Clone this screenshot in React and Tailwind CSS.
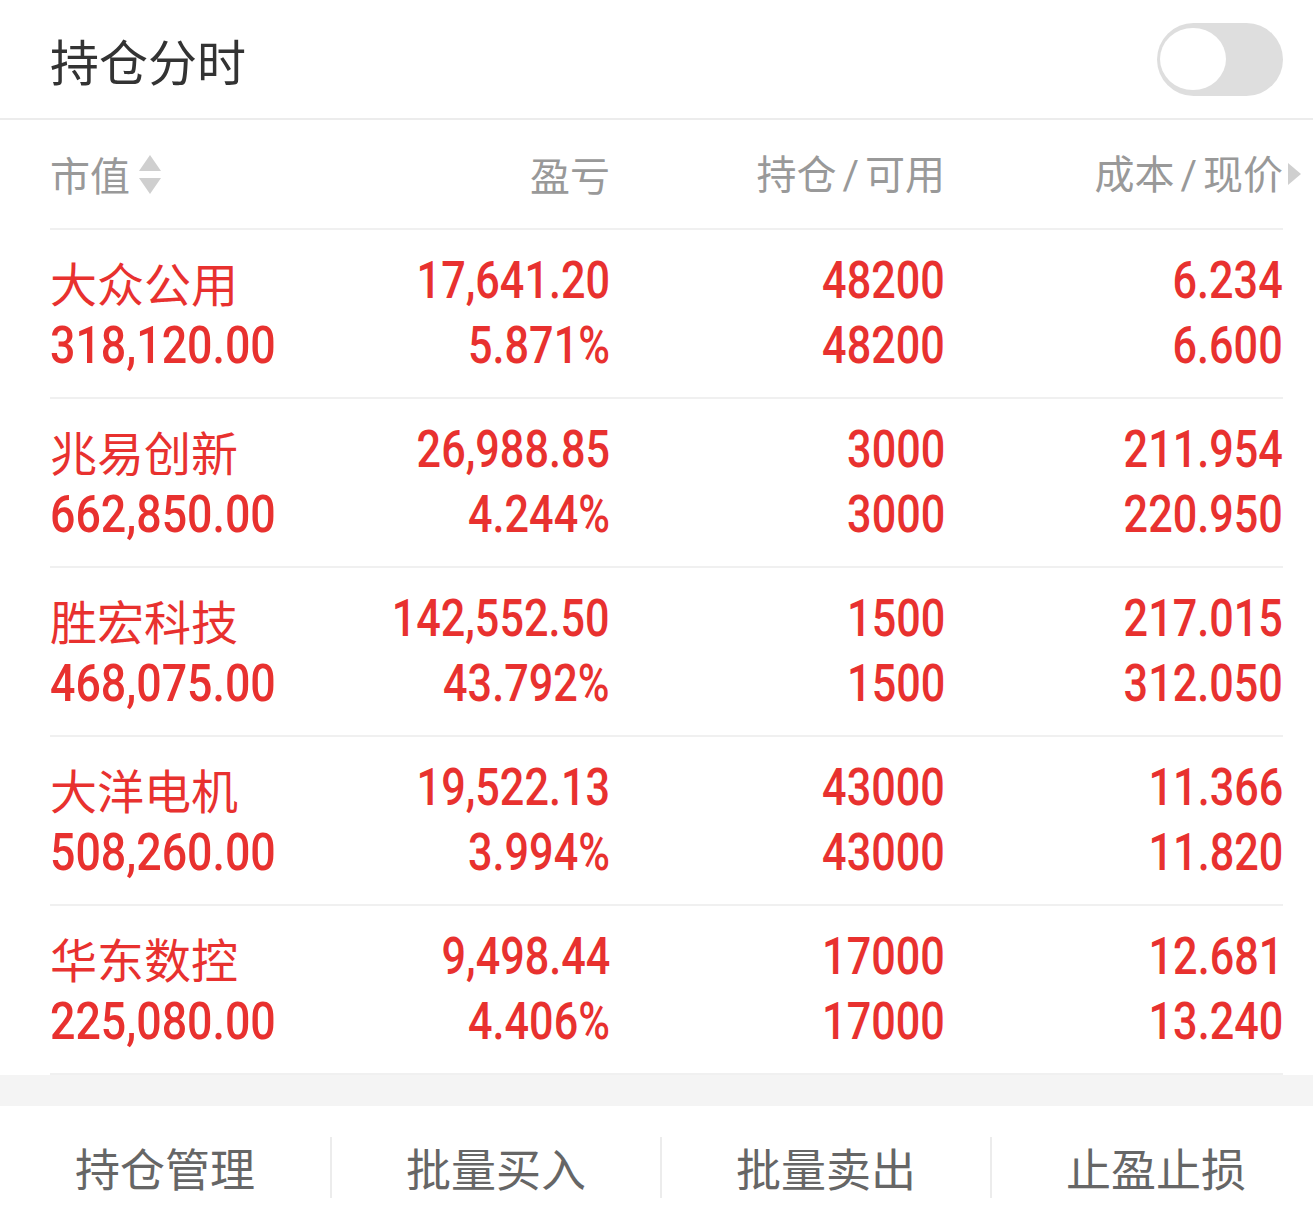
import React from "react";

const rows = [
  { name: "大众公用", mv: "318,120.00", pl: "17,641.20", pct: "5.871%", hold: "48200", avail: "48200", cost: "6.234", price: "6.600" },
  { name: "兆易创新", mv: "662,850.00", pl: "26,988.85", pct: "4.244%", hold: "3000", avail: "3000", cost: "211.954", price: "220.950" },
  { name: "胜宏科技", mv: "468,075.00", pl: "142,552.50", pct: "43.792%", hold: "1500", avail: "1500", cost: "217.015", price: "312.050" },
  { name: "大洋电机", mv: "508,260.00", pl: "19,522.13", pct: "3.994%", hold: "43000", avail: "43000", cost: "11.366", price: "11.820" },
  { name: "华东数控", mv: "225,080.00", pl: "9,498.44", pct: "4.406%", hold: "17000", avail: "17000", cost: "12.681", price: "13.240" },
];

const cjk = { fontFamily: '"Noto Sans CJK SC", "Noto Sans", sans-serif' };
const num = { fontFamily: '"Roboto", "Noto Sans CJK SC", sans-serif' };

function Num({ children }) {
  return (
    <div className="h-[65px] flex items-center justify-end text-[52px] leading-none font-medium" style={num}>
      <span className="inline-block scale-x-[0.83] origin-right">{children}</span>
    </div>
  );
}

export default function App() {
  return (
    <div className="w-[1313px] h-[1220px] bg-white overflow-hidden" style={cjk}>
      {/* title bar */}
      <div className="h-[120px] flex items-center justify-between pl-[50px] pr-[30px] border-b-2 border-[#ececec]">
        <div className="text-[49px] text-[#333] leading-none">持仓分时</div>
        <div className="w-[126px] h-[73px] rounded-full bg-[#dedede] flex items-center pl-[3px]">
          <div className="w-[66px] h-[62px] rounded-[50%] bg-white" />
        </div>
      </div>

      {/* table */}
      <div className="pl-[50px] pr-[30px]">
        <div className="h-[110px] grid grid-cols-[280px_280px_335px_1fr] items-center border-b-2 border-[#f0f0f0] text-[40px] text-[#999] leading-none">
          <div className="flex items-center">
            <span>市值</span>
            <svg width="24" height="40" viewBox="0 0 24 40" className="ml-[8px] mt-[2px]">
              <polygon points="12,0 23,16 1,16" fill="#cfcfcf" />
              <polygon points="1,23 23,23 12,39" fill="#cfcfcf" />
            </svg>
          </div>
          <div className="text-right">盈亏</div>
          <div className="text-right">持仓<span className="mx-[6px]" style={num}>/</span>可用</div>
          <div className="text-right relative">
            成本<span className="mx-[6px]" style={num}>/</span>现价
            <svg width="14" height="22" viewBox="0 0 14 22" className="absolute right-[-19px] top-1/2 -translate-y-1/2">
              <polygon points="0,0 13,11 0,22" fill="#cfcfcf" />
            </svg>
          </div>
        </div>

        {rows.map((r) => (
          <div key={r.name} className="h-[169px] grid grid-cols-[280px_280px_335px_1fr] items-center border-b-2 border-[#f0f0f0] text-[#e8312f]">
            <div>
              <div className="h-[65px] flex items-center text-[47px] leading-none">{r.name}</div>
              <div className="h-[65px] flex items-center text-[52px] leading-none font-medium" style={num}>
                <span className="inline-block scale-x-[0.86] origin-left">{r.mv}</span>
              </div>
            </div>
            <div>
              <Num>{r.pl}</Num>
              <Num>{r.pct}</Num>
            </div>
            <div>
              <Num>{r.hold}</Num>
              <Num>{r.avail}</Num>
            </div>
            <div>
              <Num>{r.cost}</Num>
              <Num>{r.price}</Num>
            </div>
          </div>
        ))}
      </div>

      <div className="h-[31px] bg-[#f4f4f4]" />

      {/* bottom bar */}
      <div className="h-[113px] flex items-center pt-[10px]">
        {["持仓管理", "批量买入", "批量卖出", "止盈止损"].map((t, i) => (
          <div key={t} className={"w-[330px] shrink-0 h-[61px] flex items-center justify-center text-[45px] text-[#666] leading-none" + (i > 0 ? " border-l-2 border-[#ececec]" : "")}>
            {t}
          </div>
        ))}
      </div>
    </div>
  );
}
